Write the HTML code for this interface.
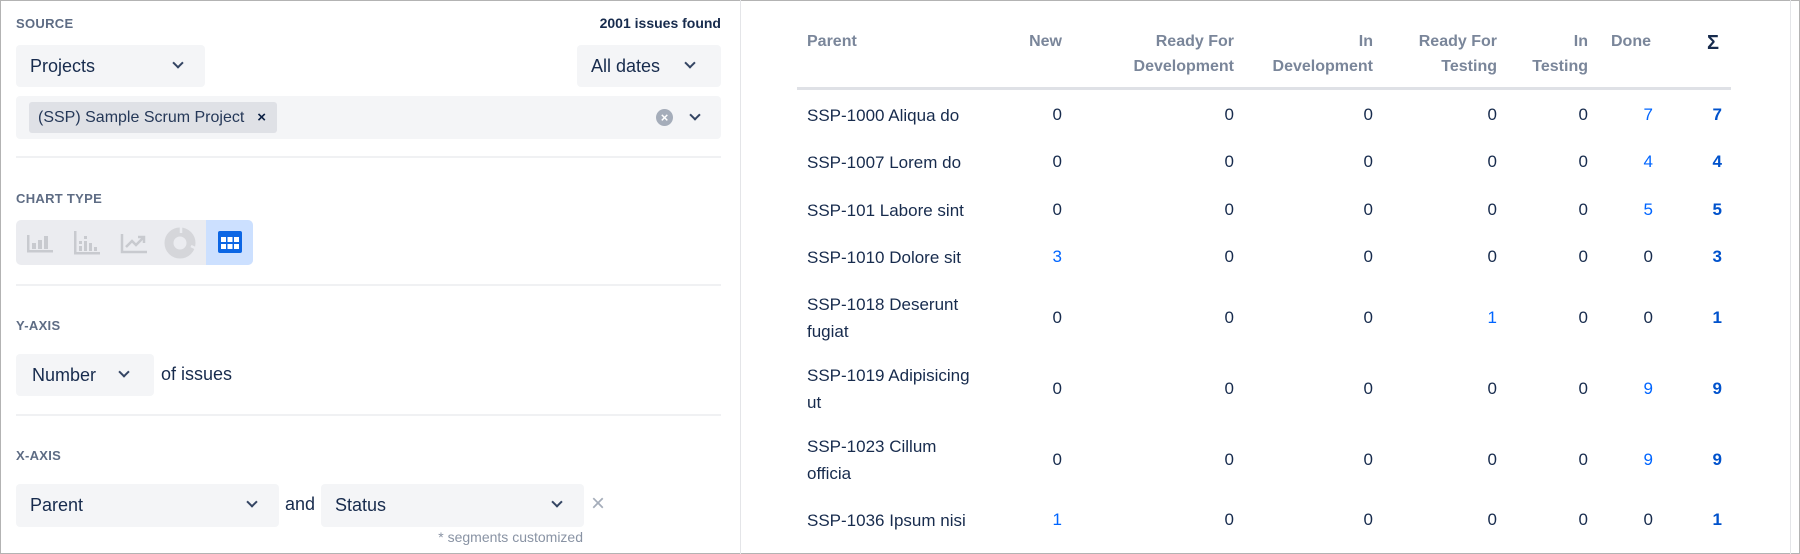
<!DOCTYPE html>
<html><head><meta charset="utf-8"><style>
*{box-sizing:border-box;margin:0;padding:0}
body{width:1800px;height:554px;background:#fff;font-family:"Liberation Sans",sans-serif;color:#172b4d;position:relative;overflow:hidden}
.a{position:absolute;white-space:nowrap}
.frame{position:absolute;left:0;top:0;width:1800px;height:554px;border:1px solid #b3b3b3}
.lbl{font-size:13px;font-weight:bold;color:#5e6c84;letter-spacing:.3px}
.dd{position:absolute;background:#f4f5f7;border-radius:4px;font-size:18px;display:flex;align-items:center;padding-left:14px}
.chev{position:absolute;width:8px;height:8px;border-right:2.2px solid #344563;border-bottom:2.2px solid #344563;transform:rotate(45deg)}
.sep{position:absolute;left:16px;width:705px;height:2px;background:#f0f1f3}
.h{position:absolute;font-size:16px;font-weight:bold;color:#7a869a;line-height:25px;text-align:right}
.c{position:absolute;font-size:17px;text-align:right;width:60px}
.b{color:#0065ff}
.s{color:#0052cc;font-weight:bold}
.p{position:absolute;left:807px;font-size:17px;line-height:27px;width:190px}
</style></head><body>
<div class="frame"></div>
<div class="a" style="left:740px;top:0;width:1px;height:554px;background:#e4e5e8"></div>
<div class="a" style="left:1790px;top:0;width:1px;height:554px;background:#e4e5e8"></div>

<div class="a lbl" style="left:16px;top:16px">SOURCE</div>
<div class="a" style="right:1079px;top:15px;font-size:14px;font-weight:bold">2001 issues found</div>
<div class="dd" style="left:16px;top:45px;width:189px;height:42px">Projects<span class="chev" style="left:158px;top:14px"></span></div>
<div class="dd" style="left:577px;top:45px;width:144px;height:42px">All dates<span class="chev" style="left:109px;top:14px"></span></div>
<div class="dd" style="left:16px;top:96px;width:705px;height:43px;padding-left:13px">
 <div style="background:#dfe1e6;border-radius:3px;height:31px;padding:0 11px 0 9px;font-size:16px;display:flex;align-items:center;color:#253858">(SSP) Sample Scrum Project<b style="margin-left:13px;font-size:15px;color:#091e42">×</b></div>
 <div class="a" style="left:640px;top:13px;width:17px;height:17px;border-radius:50%;background:#a5adba;color:#fff;font-size:13px;font-weight:bold;text-align:center;line-height:17px">×</div>
 <span class="chev" style="left:675px;top:15px"></span>
</div>
<div class="sep" style="top:156px"></div>

<div class="a lbl" style="left:16px;top:191px">CHART TYPE</div>
<div class="a" style="left:16px;top:220px;width:237px;height:45px;background:#ebecf0;border-radius:5px;overflow:hidden">
 <svg class="a" style="left:10px;top:11px" width="28" height="24" viewBox="0 0 28 24" fill="#c8cacf"><rect x="1" y="4" width="2.5" height="17"/><rect x="1" y="19" width="26" height="2.5"/><rect x="6" y="12" width="4" height="6"/><rect x="12" y="9" width="4" height="9"/><rect x="18" y="5" width="4" height="13"/></svg>
 <svg class="a" style="left:57px;top:10px" width="28" height="26" viewBox="0 0 28 26" fill="#c8cacf"><rect x="1" y="1" width="2.5" height="23"/><rect x="1" y="22" width="26" height="2.5"/><rect x="6" y="11" width="3" height="3"/><rect x="6" y="16" width="3" height="5"/><rect x="11" y="6" width="3" height="3"/><rect x="11" y="11" width="3" height="10"/><rect x="16" y="13" width="3" height="8"/><rect x="21" y="17" width="3" height="4"/></svg>
 <svg class="a" style="left:104px;top:11px" width="28" height="24" viewBox="0 0 28 24" fill="none" stroke="#c8cacf" stroke-width="2.5"><path d="M2 3V21H27"/><path d="M6 16l6-6 4 4 8-8"/><path d="M18 6h6v6" /></svg>
 <svg class="a" style="left:148px;top:7px" width="32" height="32" viewBox="0 0 32 32"><circle cx="16" cy="16" r="11" fill="none" stroke="#d5d6da" stroke-width="9"/><path d="M17 0v6M27 19l6 3" stroke="#ebecf0" stroke-width="2.5"/></svg>
 <div class="a" style="left:190px;top:0;width:47px;height:45px;background:#cce0ff"></div>
 <svg class="a" style="left:202px;top:11px" width="24" height="22" viewBox="0 0 24 22"><rect width="24" height="22" rx="2" fill="#0c66e4"/><g fill="#fff"><rect x="3" y="6" width="5" height="5"/><rect x="9.5" y="6" width="5" height="5"/><rect x="16" y="6" width="5" height="5"/><rect x="3" y="13" width="5" height="5"/><rect x="9.5" y="13" width="5" height="5"/><rect x="16" y="13" width="5" height="5"/></g></svg>
</div>
<div class="sep" style="top:284px"></div>

<div class="a lbl" style="left:16px;top:318px">Y-AXIS</div>
<div class="dd" style="left:16px;top:354px;width:138px;height:42px;padding-left:16px">Number<span class="chev" style="left:104px;top:14px"></span></div>
<div class="a" style="left:161px;top:364px;font-size:18px">of issues</div>
<div class="sep" style="top:414px"></div>

<div class="a lbl" style="left:16px;top:448px">X-AXIS</div>
<div class="dd" style="left:16px;top:484px;width:263px;height:43px">Parent<span class="chev" style="left:232px;top:14px"></span></div>
<div class="a" style="left:285px;top:494px;font-size:18px">and</div>
<div class="dd" style="left:321px;top:484px;width:263px;height:43px">Status<span class="chev" style="left:232px;top:14px"></span></div>
<div class="a" style="left:591px;top:490px;font-size:24px;color:#a5adba">×</div>
<div class="a" style="right:1217px;top:529px;font-size:14px;color:#8993a4">* segments customized</div>

<div class="h" style="left:807px;top:29px;text-align:left">Parent</div>
<div class="h" style="left:962px;top:29px;width:100px">New</div>
<div class="h" style="left:1074px;top:29px;width:160px">Ready For<br>Development</div>
<div class="h" style="left:1213px;top:29px;width:160px">In<br>Development</div>
<div class="h" style="left:1337px;top:29px;width:160px">Ready For<br>Testing</div>
<div class="h" style="left:1428px;top:29px;width:160px">In<br>Testing</div>
<div class="h" style="left:1611px;top:29px;text-align:left">Done</div>
<div class="a" style="left:1707px;top:32px;font-size:20px;font-weight:bold;color:#172b4d">Σ</div>
<div class="a" style="left:797px;top:87px;width:934px;height:3px;background:#dfe1e6"></div>

<div class="p" style="top:102px">SSP-1000 Aliqua do</div>
<div class="p" style="top:149px">SSP-1007 Lorem do</div>
<div class="p" style="top:197px">SSP-101 Labore sint</div>
<div class="p" style="top:244px">SSP-1010 Dolore sit</div>
<div class="p" style="top:291px">SSP-1018 Deserunt<br>fugiat</div>
<div class="p" style="top:362px">SSP-1019 Adipisicing<br>ut</div>
<div class="p" style="top:433px">SSP-1023 Cillum<br>officia</div>
<div class="p" style="top:507px">SSP-1036 Ipsum nisi</div>

<div style="position:absolute;left:0;top:0">
<div class="c" style="left:1002px;top:105px">0</div><div class="c" style="left:1174px;top:105px">0</div><div class="c" style="left:1313px;top:105px">0</div><div class="c" style="left:1437px;top:105px">0</div><div class="c" style="left:1528px;top:105px">0</div><div class="c b" style="left:1593px;top:105px">7</div><div class="c s" style="left:1662px;top:105px">7</div>
<div class="c" style="left:1002px;top:152px">0</div><div class="c" style="left:1174px;top:152px">0</div><div class="c" style="left:1313px;top:152px">0</div><div class="c" style="left:1437px;top:152px">0</div><div class="c" style="left:1528px;top:152px">0</div><div class="c b" style="left:1593px;top:152px">4</div><div class="c s" style="left:1662px;top:152px">4</div>
<div class="c" style="left:1002px;top:200px">0</div><div class="c" style="left:1174px;top:200px">0</div><div class="c" style="left:1313px;top:200px">0</div><div class="c" style="left:1437px;top:200px">0</div><div class="c" style="left:1528px;top:200px">0</div><div class="c b" style="left:1593px;top:200px">5</div><div class="c s" style="left:1662px;top:200px">5</div>
<div class="c b" style="left:1002px;top:247px">3</div><div class="c" style="left:1174px;top:247px">0</div><div class="c" style="left:1313px;top:247px">0</div><div class="c" style="left:1437px;top:247px">0</div><div class="c" style="left:1528px;top:247px">0</div><div class="c" style="left:1593px;top:247px">0</div><div class="c s" style="left:1662px;top:247px">3</div>
<div class="c" style="left:1002px;top:308px">0</div><div class="c" style="left:1174px;top:308px">0</div><div class="c" style="left:1313px;top:308px">0</div><div class="c b" style="left:1437px;top:308px">1</div><div class="c" style="left:1528px;top:308px">0</div><div class="c" style="left:1593px;top:308px">0</div><div class="c s" style="left:1662px;top:308px">1</div>
<div class="c" style="left:1002px;top:379px">0</div><div class="c" style="left:1174px;top:379px">0</div><div class="c" style="left:1313px;top:379px">0</div><div class="c" style="left:1437px;top:379px">0</div><div class="c" style="left:1528px;top:379px">0</div><div class="c b" style="left:1593px;top:379px">9</div><div class="c s" style="left:1662px;top:379px">9</div>
<div class="c" style="left:1002px;top:450px">0</div><div class="c" style="left:1174px;top:450px">0</div><div class="c" style="left:1313px;top:450px">0</div><div class="c" style="left:1437px;top:450px">0</div><div class="c" style="left:1528px;top:450px">0</div><div class="c b" style="left:1593px;top:450px">9</div><div class="c s" style="left:1662px;top:450px">9</div>
<div class="c b" style="left:1002px;top:510px">1</div><div class="c" style="left:1174px;top:510px">0</div><div class="c" style="left:1313px;top:510px">0</div><div class="c" style="left:1437px;top:510px">0</div><div class="c" style="left:1528px;top:510px">0</div><div class="c" style="left:1593px;top:510px">0</div><div class="c s" style="left:1662px;top:510px">1</div>
</div>
</body></html>
